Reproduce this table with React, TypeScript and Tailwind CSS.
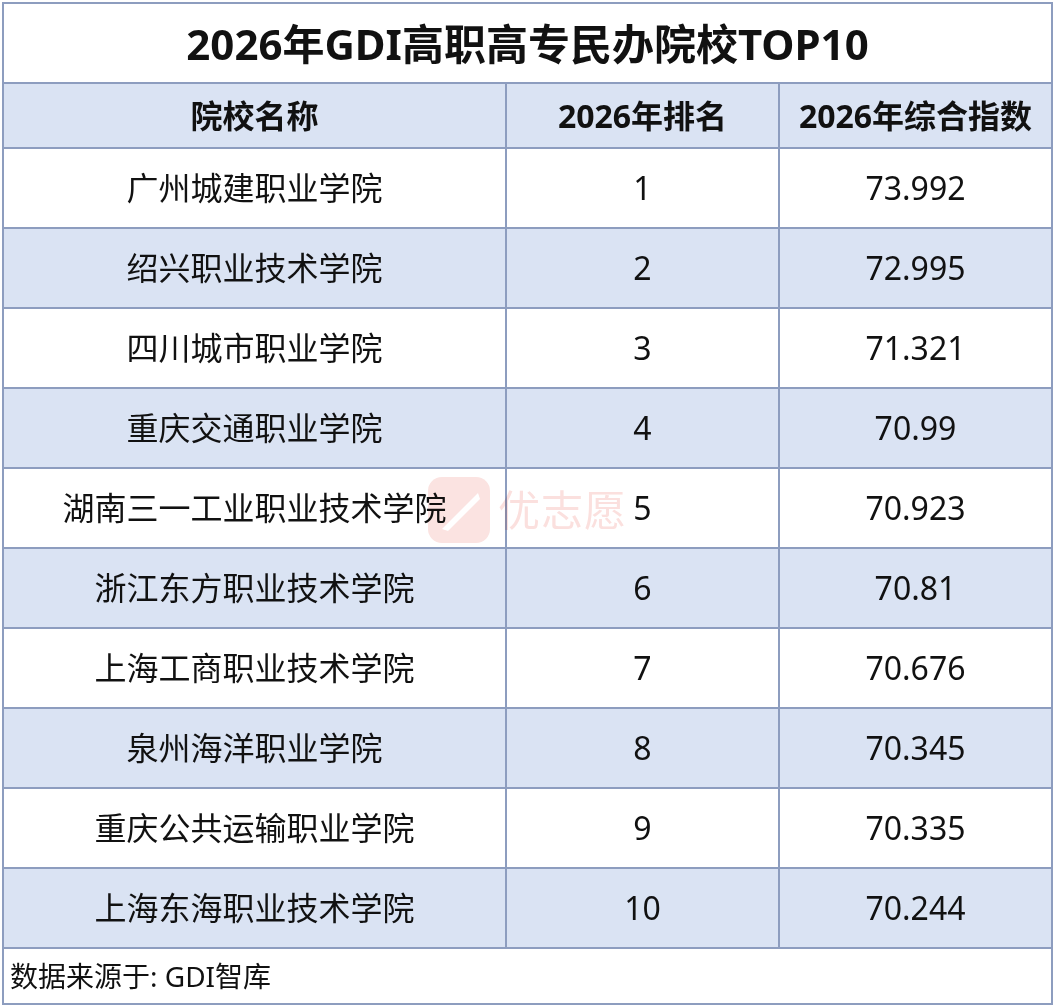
import React from 'react'

const rows = [
  { name: '广州城建职业学院', rank: '1', score: '73.992' },
  { name: '绍兴职业技术学院', rank: '2', score: '72.995' },
  { name: '四川城市职业学院', rank: '3', score: '71.321' },
  { name: '重庆交通职业学院', rank: '4', score: '70.99' },
  { name: '湖南三一工业职业技术学院', rank: '5', score: '70.923' },
  { name: '浙江东方职业技术学院', rank: '6', score: '70.81' },
  { name: '上海工商职业技术学院', rank: '7', score: '70.676' },
  { name: '泉州海洋职业学院', rank: '8', score: '70.345' },
  { name: '重庆公共运输职业学院', rank: '9', score: '70.335' },
  { name: '上海东海职业技术学院', rank: '10', score: '70.244' },
]

const font = { fontFamily: '"Noto Sans", "Noto Sans CJK SC", sans-serif' }

// faint brand mark sitting over the middle of the table (multiplied so text stays readable)
function Watermark() {
  return (
    <div className="absolute left-[424px] top-[473px] flex items-center gap-[8px] pointer-events-none mix-blend-multiply">
      <svg width="62" height="66" viewBox="0 0 62 66">
        <rect x="0" y="0" width="62" height="66" rx="14" fill="#fbe3e1" />
        <path d="M14 52 L50 16 L52 22 L20 54 Z" fill="#ffffff" />
      </svg>
      <span className="text-[42px] leading-none text-[#fbe0de] tracking-[1px]">优志愿</span>
    </div>
  )
}

export default function App() {
  return (
    <div className="w-[1058px] h-[1008px] bg-white pt-[2px] pl-[2px]" style={font}>
      <div className="relative w-[1051px] border-2 border-[#8d9dbf] text-[#111]">
        <div className="h-[80px] flex items-center justify-center text-[42px] font-bold border-b-2 border-[#8d9dbf]">
          2026年GDI高职高专民办院校TOP10
        </div>
        <div className="grid grid-cols-[503px_273px_1fr] h-[65px] bg-[#dae3f3] border-b-2 border-[#8d9dbf] text-[32px] font-bold">
          <div className="flex items-center justify-center border-r-2 border-[#8d9dbf]">院校名称</div>
          <div className="flex items-center justify-center border-r-2 border-[#8d9dbf]">2026年排名</div>
          <div className="flex items-center justify-center">2026年综合指数</div>
        </div>
        {rows.map((r, i) => (
          <div
            key={r.rank}
            className={`grid grid-cols-[503px_273px_1fr] h-[80px] border-b-2 border-[#8d9dbf] text-[32px] ${
              i % 2 === 1 ? 'bg-[#dae3f3]' : 'bg-white'
            }`}
          >
            <div className="flex items-center justify-center border-r-2 border-[#8d9dbf]">{r.name}</div>
            <div className="flex items-center justify-center border-r-2 border-[#8d9dbf]">{r.rank}</div>
            <div className="flex items-center justify-center">{r.score}</div>
          </div>
        ))}
        <div className="h-[54px] flex items-center pl-[6px] text-[28px]">数据来源于: GDI智库</div>
        <Watermark />
      </div>
    </div>
  )
}
